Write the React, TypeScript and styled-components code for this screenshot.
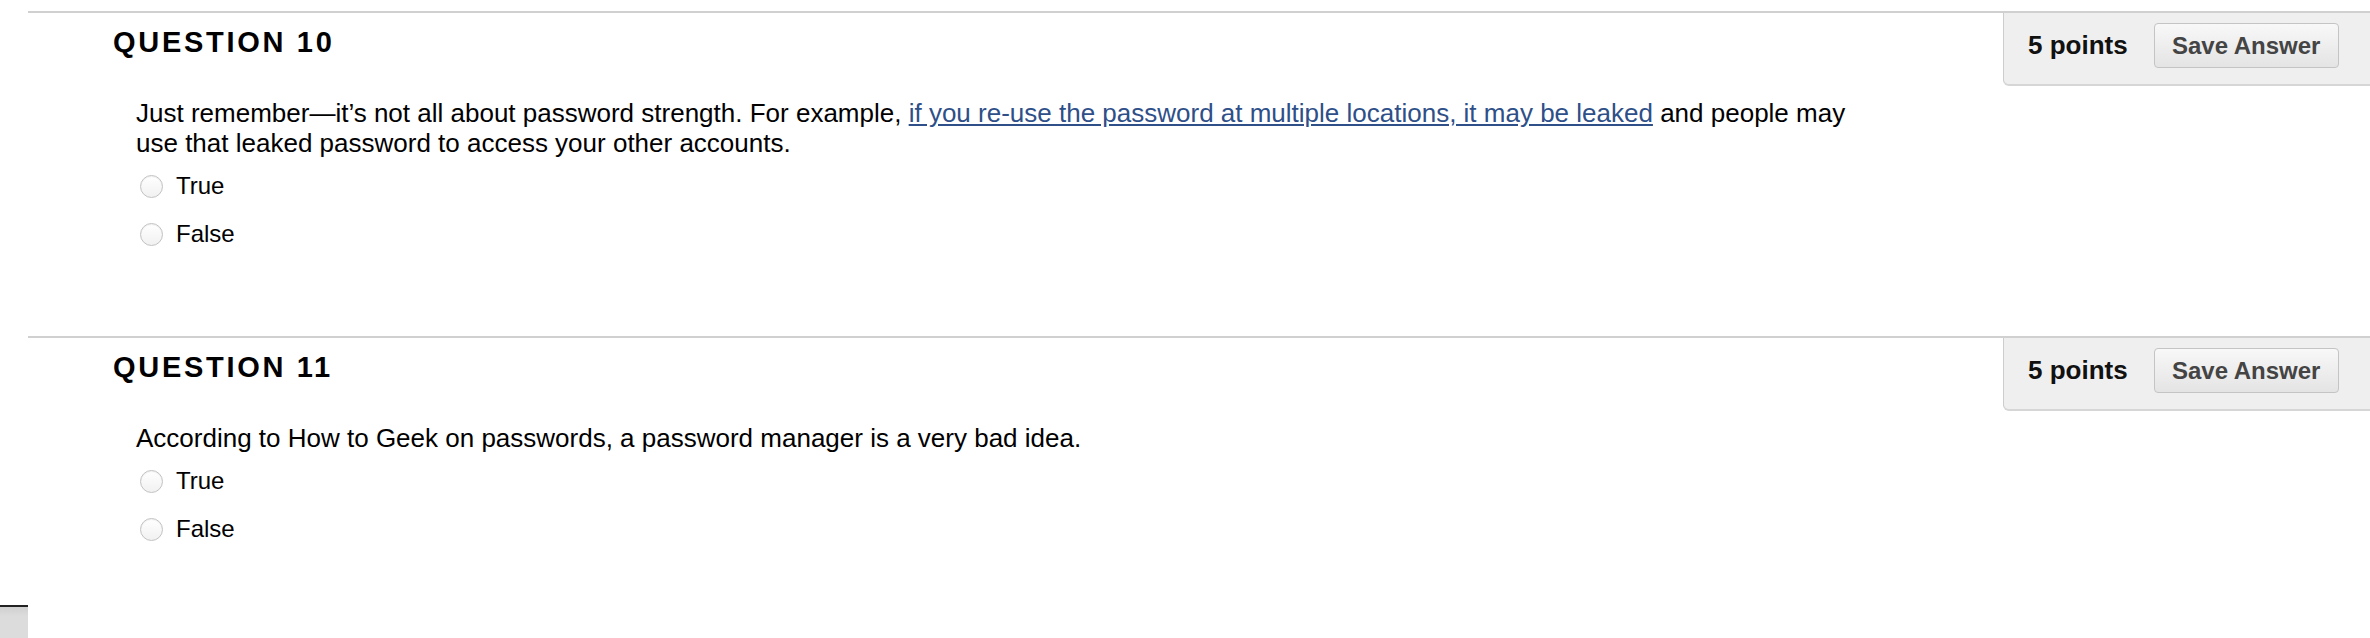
import { ReactNode } from 'react';
import styled, { createGlobalStyle } from 'styled-components';

type Question = {
  id: number;
  points: number;
  text: () => ReactNode;
};

const questions: Question[] = [
  {
    id: 10,
    points: 5,
    text: () => (
      <>
        Just remember—it’s not all about password strength. For example,{' '}
        <Link href="#">if you re-use the password at multiple locations, it may be leaked</Link> and
        people may use that leaked password to access your other accounts.
      </>
    ),
  },
  {
    id: 11,
    points: 5,
    text: () => <>According to How to Geek on passwords, a password manager is a very bad idea.</>,
  },
];

const GlobalStyle = createGlobalStyle`
  body {
    margin: 0;
    background: #fff;
    color: #000;
    font-family: "Liberation Sans", Helvetica, Arial, sans-serif;
  }
`;

const App = () => {
  return (
    <>
      <GlobalStyle />
      <Page>
        {questions.map((q) => (
          <QuestionBlock key={q.id} question={q} />
        ))}
      </Page>
      <CollapsedTab />
    </>
  );
};

const QuestionBlock = ({ question }: { question: Question }) => {
  const { id, points, text } = question;
  const name = `q-${id}`;

  return (
    <Section>
      <Content>
        <Heading>QUESTION {id}</Heading>
        <Body>{text()}</Body>
        <Options>
          {['True', 'False'].map((label) => (
            <Option key={label}>
              <Radio type="radio" name={name} />
              {label}
            </Option>
          ))}
        </Options>
      </Content>
      <PointsPanel>
        <Points>{points} points</Points>
        <SaveButton>Save Answer</SaveButton>
      </PointsPanel>
    </Section>
  );
};

const Page = styled.div`
  padding: 11px 0 0 28px;
`;

const Section = styled.section`
  display: grid;
  grid-template-columns: 1fr 367px;
  height: 325px;
  box-sizing: border-box;
  border-top: 2px solid #d0d0d0;
`;

const Content = styled.div`
  padding: 12px 0 0 85px;
`;

const Heading = styled.h2`
  margin: 0;
  font-size: 29px;
  line-height: 34px;
  font-weight: 700;
  letter-spacing: 2.7px;
`;

const Body = styled.p`
  margin: 39px 0 0 23px;
  max-width: 1740px;
  font-size: 26px;
  line-height: 30px;
`;

const Link = styled.a`
  color: #2e4f88;
  text-decoration: underline;
`;

const Options = styled.div`
  margin: 4px 0 0 27px;
  display: flex;
  flex-direction: column;
`;

const Option = styled.label`
  display: flex;
  align-items: center;
  gap: 13px;
  height: 48px;
  font-size: 24px;
`;

const Radio = styled.input`
  appearance: none;
  margin: 0;
  width: 23px;
  height: 23px;
  border-radius: 50%;
  border: 1px solid #c2c2c2;
  background: linear-gradient(#ffffff, #f1f1f1);
  box-shadow: inset 0 1px 1px rgba(0, 0, 0, 0.06);
`;

const PointsPanel = styled.div`
  align-self: start;
  display: flex;
  align-items: center;
  gap: 26px;
  padding: 10px 0 16px 24px;
  background: #efefef;
  border-left: 1px solid #cdcdcd;
  border-bottom: 2px solid #d6d6d6;
  border-bottom-left-radius: 6px;
`;

const Points = styled.span`
  font-size: 26px;
  font-weight: 700;
  color: #111;
`;

const SaveButton = styled.button`
  width: 185px;
  height: 45px;
  padding: 0;
  border: 1px solid #c4c4c4;
  border-radius: 4px;
  background: linear-gradient(#f8f8f8, #e4e4e4);
  font-family: "Liberation Sans", Helvetica, Arial, sans-serif;
  font-size: 24px;
  font-weight: 700;
  color: #444;
  cursor: pointer;
`;

const CollapsedTab = styled.div`
  position: fixed;
  left: 0;
  bottom: 0;
  width: 28px;
  height: 31px;
  border-top: 2px solid #222;
  background: linear-gradient(#d0d0d0, #dcdcdc 30%);
`;

export default App;
